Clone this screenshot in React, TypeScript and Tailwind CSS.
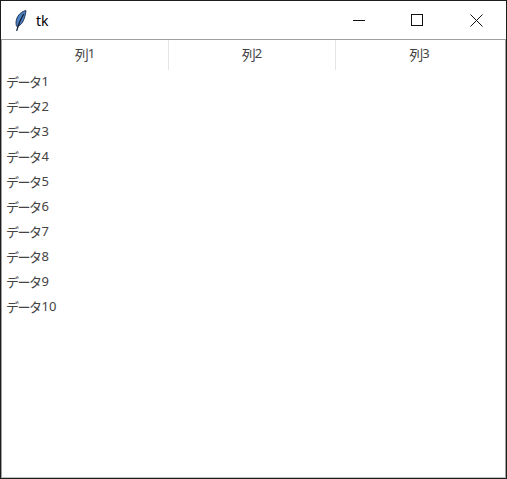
const rows = ["1", "2", "3", "4", "5", "6", "7", "8", "9", "10"];
const columns = ["1", "2", "3"];

const digitFont = { fontFamily: '"Noto Sans", sans-serif' };

const Feather = () => (
  <svg viewBox="0 0 12 21" className="w-[12px] h-[21px]">
    <path d="M11 0.6C6.8 1.2 2.6 5 1.4 9.8c-.7 2.8-.5 5.2.4 6.6 4.4-.4 8-6 9.2-15.8z" fill="#4a7fc0" stroke="#1d2c48" strokeWidth="0.9" />
    <path d="M8.4 4.5C6 8.5 3.8 12.5 1.8 20.4" fill="none" stroke="#14203a" strokeWidth="1.3" strokeLinecap="round" />
  </svg>
);

export default function App() {
  return (
    <div
      className="w-[507px] h-[479px] flex flex-col bg-white border border-[#1c1c1c] overflow-hidden text-[#444444]"
      style={{ fontFamily: '"Noto Sans CJK JP", "Noto Sans", sans-serif' }}
    >
      {/* title bar */}
      <div className="h-[38px] shrink-0 flex items-center bg-white">
        <div className="ml-[14px] w-[12px] flex items-center">
          <Feather />
        </div>
        <span className="ml-[9px] text-[14px] text-black" style={digitFont}>
          tk
        </span>
        <div className="ml-auto flex h-full">
          <div className="w-[59px] flex items-center justify-center">
            <svg width="12" height="12" viewBox="0 0 12 12"><path d="M0 6.5h12" stroke="#111" strokeWidth="1" /></svg>
          </div>
          <div className="w-[59px] flex items-center justify-center pr-[2px]">
            <svg width="12" height="12" viewBox="0 0 12 12"><rect x="0.5" y="0.5" width="11" height="11" fill="none" stroke="#111" strokeWidth="1" /></svg>
          </div>
          <div className="w-[59px] flex items-center justify-center">
            <svg width="13" height="13" viewBox="0 0 13 13"><path d="M0.5 0.5l12 12M12.5 0.5l-12 12" stroke="#111" strokeWidth="1" /></svg>
          </div>
        </div>
      </div>

      {/* tree */}
      <div className="flex-1 flex flex-col border border-[#a0a0a0] border-b-[#c4c4c4]">
        <div className="h-[30px] shrink-0 grid grid-cols-3 pr-[2px]">
          {columns.map((c) => (
            <div key={c} className="flex items-center justify-center pb-[2px] border-r border-[#e5e5e5] last:border-r-0 text-[14px]">
              <span className="tracking-[-1px]">列</span>
              <span className="text-[13px]" style={digitFont}>{c}</span>
            </div>
          ))}
        </div>
        <div className="flex flex-col">
          {rows.map((r) => (
            <div key={r} className="h-[25px] flex items-center pl-[4px] pb-[2px] text-[13px]">
              <span className="tracking-[-1.5px]">データ</span>
              <span className="ml-[1px] text-[13px]" style={digitFont}>{r}</span>
            </div>
          ))}
        </div>
      </div>
    </div>
  );
}
